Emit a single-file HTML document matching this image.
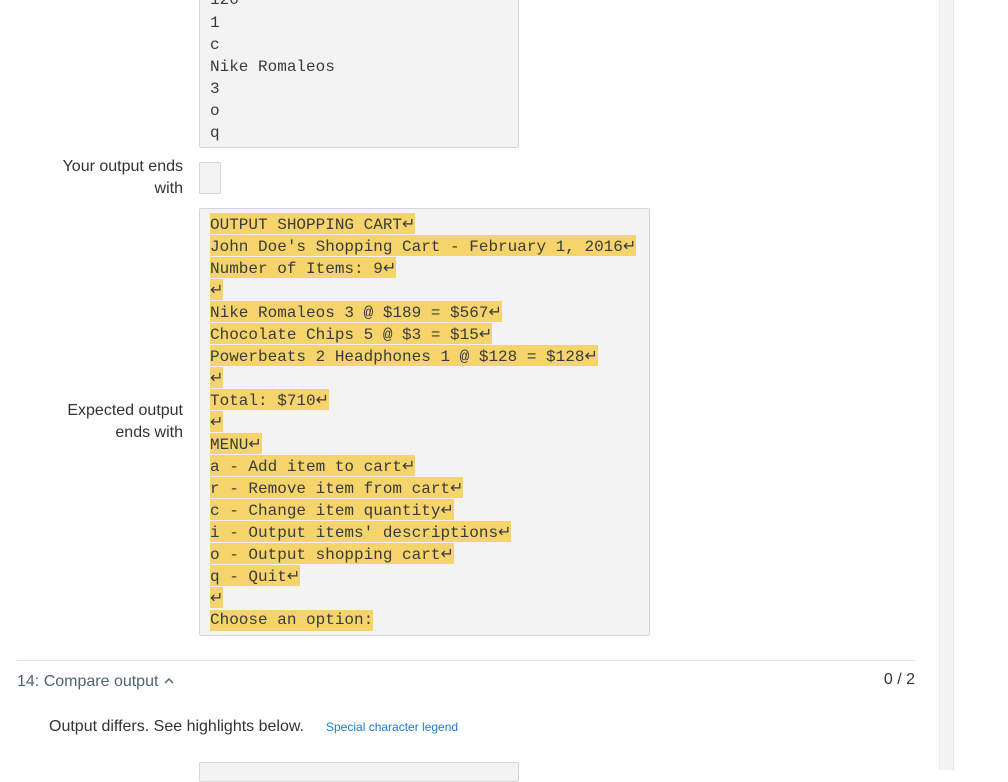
<!DOCTYPE html>
<html><head><style>
body{margin:0;width:1008px;height:770px;overflow:hidden;background:#fff;font-family:"Liberation Sans",sans-serif;position:relative}
.box{position:absolute;background:#f3f3f3;border:1px solid #d6d6d6;border-radius:2px;box-sizing:border-box}
.mono{font-family:"Liberation Mono","DejaVu Sans Mono",monospace;font-size:16px;color:#3a3a3a;}
.ln{position:absolute;left:210px;height:22px;line-height:22px;white-space:pre}
.hl span{background:#f5d56b;display:inline-block;height:21px;line-height:21px}
.r{font-family:"DejaVu Sans",sans-serif;font-size:16px;font-weight:normal}
.lab{position:absolute;right:825px;text-align:right;font-size:16px;color:#333;line-height:22px}
</style></head><body>
<div style="position:absolute;left:939px;top:0;width:13px;height:770px;background:#f4f4f4;border-left:1px solid #eaeaea;border-right:1px solid #e2e2e2"></div>

<div class="box" style="left:199px;top:-5px;width:320px;height:153px"></div>
<div class="mono">
<div class="ln" style="top:-11px">120</div>
<div class="ln" style="top:12px">1</div>
<div class="ln" style="top:34px">c</div>
<div class="ln" style="top:56px">Nike Romaleos</div>
<div class="ln" style="top:78px">3</div>
<div class="ln" style="top:100px">o</div>
<div class="ln" style="top:122px">q</div>
</div>

<div class="lab" style="top:156px">Your output ends<br>with</div>
<div class="box" style="left:199px;top:162px;width:22px;height:32px"></div>

<div class="lab" style="top:400px">Expected output<br>ends with</div>
<div class="box" style="left:199px;top:208px;width:451px;height:428px"></div>
<div class="mono hl">
<div class="ln" style="top:213px"><span>OUTPUT SHOPPING CART<b class="r">↵</b></span></div>
<div class="ln" style="top:235px"><span>John Doe's Shopping Cart - February 1, 2016<b class="r">↵</b></span></div>
<div class="ln" style="top:257px"><span>Number of Items: 9<b class="r">↵</b></span></div>
<div class="ln" style="top:279px"><span><b class="r">↵</b></span></div>
<div class="ln" style="top:301px"><span>Nike Romaleos 3 @ $189 = $567<b class="r">↵</b></span></div>
<div class="ln" style="top:323px"><span>Chocolate Chips 5 @ $3 = $15<b class="r">↵</b></span></div>
<div class="ln" style="top:345px"><span>Powerbeats 2 Headphones 1 @ $128 = $128<b class="r">↵</b></span></div>
<div class="ln" style="top:367px"><span><b class="r">↵</b></span></div>
<div class="ln" style="top:389px"><span>Total: $710<b class="r">↵</b></span></div>
<div class="ln" style="top:411px"><span><b class="r">↵</b></span></div>
<div class="ln" style="top:433px"><span>MENU<b class="r">↵</b></span></div>
<div class="ln" style="top:455px"><span>a - Add item to cart<b class="r">↵</b></span></div>
<div class="ln" style="top:477px"><span>r - Remove item from cart<b class="r">↵</b></span></div>
<div class="ln" style="top:499px"><span>c - Change item quantity<b class="r">↵</b></span></div>
<div class="ln" style="top:521px"><span>i - Output items' descriptions<b class="r">↵</b></span></div>
<div class="ln" style="top:543px"><span>o - Output shopping cart<b class="r">↵</b></span></div>
<div class="ln" style="top:565px"><span>q - Quit<b class="r">↵</b></span></div>
<div class="ln" style="top:587px"><span><b class="r">↵</b></span></div>
<div class="ln" style="top:609px"><span>Choose an option:</span></div>
</div>

<div style="position:absolute;left:17px;top:660px;width:898px;height:1px;background:#e6e6e6"></div>
<div style="position:absolute;left:17px;top:673px;font-size:16px;color:#4d6473">14: Compare output <svg width="12" height="10" viewBox="0 0 12 10" style="vertical-align:0"><path d="M2 7 L6 3 L10 7" fill="none" stroke="#4d6473" stroke-width="1.5"/></svg></div>
<div style="position:absolute;right:93px;top:671px;font-size:16px;color:#333">0 / 2</div>
<div style="position:absolute;left:49px;top:718px;font-size:16px;color:#333">Output differs. See highlights below.</div>
<div style="position:absolute;left:326px;top:720px;font-size:12px;color:#1a7ad4">Special character legend</div>
<div class="box" style="left:199px;top:762px;width:320px;height:20px"></div>
</body></html>
